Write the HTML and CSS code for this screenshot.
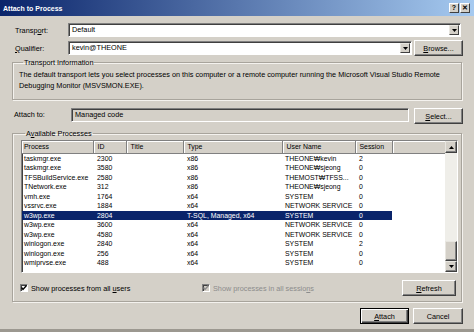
FILE: index.html
```html
<!DOCTYPE html>
<html lang="en">
<head>
    <meta charset="UTF-8">
    <title>Attach to Process</title>
    <link rel="stylesheet" href="styles.css">
</head>
<body>
    <div class="window">
        <div class="titlebar">
            <span class="title">Attach to Process</span>
            <div class="caption-btns">
                <span class="cbtn">?</span>
                <span class="cbtn">&#x2715;</span>
            </div>
        </div>

        <div class="content">
            <!-- Transport / Qualifier -->
            <div class="field field-first">
                <label>Transp<u>o</u>rt:</label>
                <div class="combo combo-wide"><span>Default</span><span class="drop"><svg width="5" height="3"><polygon points="0,0 5,0 2.5,3" fill="#000"/></svg></span></div>
            </div>
            <div class="field field-second">
                <label><u>Q</u>ualifier:</label>
                <div class="combo"><span>kevin@THEONE</span><span class="drop"><svg width="5" height="3"><polygon points="0,0 5,0 2.5,3" fill="#000"/></svg></span></div>
                <button class="btn"><u>B</u>rowse...</button>
            </div>

            <fieldset class="group group-info">
                <legend>Transport Information</legend>
                <p>The default transport lets you select processes on this computer or a remote computer running the Microsoft Visual Studio Remote Debugging Monitor (MSVSMON.EXE).</p>
            </fieldset>

            <div class="field field-attach">
                <label>Attach to:</label>
                <div class="textbox">Managed code</div>
                <button class="btn"><u>S</u>elect...</button>
            </div>

            <fieldset class="group group-procs">
                <legend>A<u>v</u>ailable Processes</legend>
                <div class="list">
                    <table class="procs">
                        <colgroup>
                            <col class="c-proc"><col class="c-id"><col class="c-title"><col class="c-type"><col class="c-user"><col class="c-sess"><col>
                        </colgroup>
                        <thead>
                            <tr><th>Process</th><th>ID</th><th>Title</th><th>Type</th><th>User Name</th><th>Session</th><th></th></tr>
                        </thead>
                        <tbody>
                            <tr><td>taskmgr.exe</td><td>2300</td><td></td><td>x86</td><td>THEONE₩kevin</td><td>2</td><td></td></tr>
                            <tr><td>taskmgr.exe</td><td>3580</td><td></td><td>x86</td><td>THEONE₩sjeong</td><td>0</td><td></td></tr>
                            <tr><td>TFSBuildService.exe</td><td>2580</td><td></td><td>x86</td><td>THEMOST₩TFSS...</td><td>0</td><td></td></tr>
                            <tr><td>TNetwork.exe</td><td>312</td><td></td><td>x86</td><td>THEONE₩sjeong</td><td>0</td><td></td></tr>
                            <tr><td>vmh.exe</td><td>1764</td><td></td><td>x64</td><td>SYSTEM</td><td>0</td><td></td></tr>
                            <tr><td>vssrvc.exe</td><td>1884</td><td></td><td>x64</td><td>NETWORK SERVICE</td><td>0</td><td></td></tr>
                            <tr class="selected"><td>w3wp.exe</td><td>2804</td><td></td><td>T-SQL, Managed, x64</td><td>SYSTEM</td><td>0</td><td></td></tr>
                            <tr><td>w3wp.exe</td><td>3600</td><td></td><td>x64</td><td>NETWORK SERVICE</td><td>0</td><td></td></tr>
                            <tr><td>w3wp.exe</td><td>4580</td><td></td><td>x64</td><td>NETWORK SERVICE</td><td>0</td><td></td></tr>
                            <tr><td>winlogon.exe</td><td>2840</td><td></td><td>x64</td><td>SYSTEM</td><td>2</td><td></td></tr>
                            <tr><td>winlogon.exe</td><td>256</td><td></td><td>x64</td><td>SYSTEM</td><td>0</td><td></td></tr>
                            <tr><td>wmiprvse.exe</td><td>488</td><td></td><td>x64</td><td>SYSTEM</td><td>0</td><td></td></tr>
                        </tbody>
                    </table>
                    <div class="scrollbar">
                        <span class="sb-btn"><svg width="5" height="3"><polygon points="0,3 5,3 2.5,0" fill="#000"/></svg></span>
                        <div class="sb-track"><span class="sb-thumb"></span></div>
                        <span class="sb-btn sb-down"><svg width="5" height="3"><polygon points="0,0 5,0 2.5,3" fill="#000"/></svg></span>
                    </div>
                </div>

                <div class="options">
                    <label class="check">
                        <span class="box"><svg width="6" height="6"><polyline points="0.5,2.5 2,4.5 5.5,0.5" fill="none" stroke="#000" stroke-width="1.4"/></svg></span>
                        <span>Show processes from all <u>u</u>sers</span>
                    </label>
                    <label class="check disabled">
                        <span class="box"><svg width="6" height="6"><polyline points="0.5,2.5 2,4.5 5.5,0.5" fill="none" stroke="#8c8c8c" stroke-width="1.4"/></svg></span>
                        <span>Show processes in all sessio<u>n</u>s</span>
                    </label>
                    <button class="btn btn-refresh"><u>R</u>efresh</button>
                </div>
            </fieldset>

            <div class="footer">
                <button class="btn btn-default"><u>A</u>ttach</button>
                <button class="btn btn-cancel">Cancel</button>
            </div>
        </div>
    </div>
</body>
</html>
```

FILE: styles.css
```css
* {
    margin: 0;
    padding: 0;
    box-sizing: border-box;
}

body {
    background: #d4d0c8;
    font-family: "Liberation Sans", Arial, sans-serif;
    font-size: 7.3px;
    color: #000;
}

.window {
    width: 474px;
    height: 332px;
    background: #d4d0c8;
    border-bottom: 3px solid #9c9890;
    display: flex;
    flex-direction: column;
}

/* title bar */
.titlebar {
    height: 16px;
    flex: none;
    background: linear-gradient(to right, #0a246a, #a6caf0);
    display: flex;
    align-items: center;
    justify-content: space-between;
    padding: 0 4px 0 3px;
}

.title {
    color: #fff;
    font-weight: bold;
    font-size: 7px;
}

.caption-btns {
    display: flex;
    gap: 1px;
}

.cbtn {
    width: 10px;
    height: 10px;
    background: #d4d0c8;
    border: 1px solid;
    border-color: #fff #404040 #404040 #fff;
    font-size: 7px;
    font-weight: bold;
    line-height: 8px;
    text-align: center;
}

.content {
    flex: 1;
    padding: 0 11px 0 12px;
    display: flex;
    flex-direction: column;
}

/* label + control rows */
.field {
    display: flex;
    align-items: center;
}

.field label {
    width: 56px;
    padding-left: 3px;
    flex: none;
}

.field-first {
    margin-top: 7px;
    height: 14px;
}

.field-second {
    margin-top: 3px;
    height: 16px;
}

.field-attach {
    margin-top: 8.5px;
    height: 16px;
    align-items: flex-start;
}

.field-attach label {
    width: 59px;
    padding-left: 2px;
    line-height: 14px;
}

.combo,
.textbox {
    flex: 1;
    height: 14px;
    background: #fff;
    border: 1px solid;
    border-color: #808080 #fff #fff #808080;
    box-shadow: inset 1px 1px 0 #404040;
    padding-left: 3px;
    line-height: 12px;
    display: flex;
    align-items: center;
    justify-content: space-between;
}

.combo-wide {
    margin-right: 2px;
}

.textbox {
    background: #d4d0c8;
    margin-right: 5px;
}

.drop {
    width: 10px;
    height: 10px;
    margin-right: 1px;
    background: #d4d0c8;
    border: 1px solid;
    border-color: #e8e6e0 #404040 #404040 #e8e6e0;
    display: flex;
    align-items: center;
    justify-content: center;
}

.btn {
    font-family: inherit;
    font-size: 7.3px;
    color: #000;
    width: 49px;
    height: 16px;
    flex: none;
    background: #d4d0c8;
    border: 1px solid;
    border-color: #fff #404040 #404040 #fff;
    box-shadow: inset -1px -1px 0 #808080;
}

.field-second .btn {
    margin-left: 2px;
}

/* group boxes */
.group {
    border: 1px solid #a8a49c;
    box-shadow: 1px 1px 0 #f4f2ee, inset 1px 1px 0 #f4f2ee;
    margin-right: 1px;
}

.group legend {
    margin-left: 4px;
    padding: 0 1px;
    line-height: 9px;
}

.group-info {
    margin-top: 1.5px;
    padding: 2px 8px 8px 6px;
}

.group-info p {
    line-height: 11px;
}

.group-procs {
    margin-top: 4.5px;
    padding: 2.5px 3px 5px 8px;
}

/* process list */
.list {
    height: 133px;
    background: #fff;
    border: 1px solid;
    border-color: #808080 #fff #fff #808080;
    box-shadow: inset 1px 1px 0 #404040;
    display: flex;
}

.procs {
    width: 423px;
    table-layout: fixed;
    border-collapse: collapse;
    align-self: flex-start;
    font-size: 6.9px;
}

.c-proc { width: 71px; }
.c-id { width: 33px; }
.c-title { width: 57px; }
.c-type { width: 99px; }
.c-user { width: 73px; }
.c-sess { width: 37px; }

.procs th {
    height: 12px;
    font-weight: normal;
    text-align: left;
    padding: 0 0 0 4px;
    background: #d4d0c8;
    border-right: 1px solid #808080;
    border-bottom: 1px solid #808080;
    box-shadow: inset 1px 1px 0 #fff;
}

.procs th:last-child {
    border-right: none;
}

.procs td {
    height: 9.5px;
    line-height: 9.5px;
    padding: 0 0 0 4px;
    white-space: nowrap;
}

.procs td:first-child,
.procs th:first-child {
    padding-left: 2px;
}

.procs td:nth-child(5) {
    padding-left: 3px;
}

.procs tr.selected td {
    background: #0a246a;
    color: #fff;
}

.procs tr.selected td:last-child {
    background: #fff;
}

.scrollbar {
    width: 12px;
    display: flex;
    flex-direction: column;
    background: #efeee9;
}

.sb-btn {
    height: 12px;
    flex: none;
    background: #d4d0c8;
    border: 1px solid;
    border-color: #e8e6e0 #404040 #404040 #e8e6e0;
    box-shadow: inset -1px -1px 0 #808080;
    display: flex;
    align-items: center;
    justify-content: center;
}

.sb-down {
    height: 11px;
}

.sb-track {
    flex: 1;
    display: flex;
    flex-direction: column;
    justify-content: flex-end;
}

.sb-thumb {
    height: 20px;
    background: #d4d0c8;
    border: 1px solid;
    border-color: #e8e6e0 #404040 #404040 #e8e6e0;
    box-shadow: inset -1px -1px 0 #808080;
}

/* checkboxes + refresh */
.options {
    margin-top: 7px;
    height: 16px;
    display: flex;
    align-items: center;
}

.check {
    display: flex;
    align-items: center;
    gap: 3px;
}

.check:first-child {
    margin-left: -1px;
    width: 182px;
}

.check .box {
    width: 8px;
    height: 8px;
    background: #fff;
    border: 1px solid;
    border-color: #808080 #fff #fff #808080;
    box-shadow: inset 1px 1px 0 #404040;
    display: flex;
    align-items: center;
    justify-content: center;
}

.check.disabled {
    color: #8c8c8c;
}

.check.disabled .box {
    background: #d4d0c8;
}

.btn-refresh {
    width: 54px;
    margin-left: auto;
    margin-right: 2px;
}

/* dialog buttons */
.footer {
    margin-top: 6px;
    display: flex;
    justify-content: flex-end;
    gap: 4px;
}

.btn-default {
    border: 1px solid #000;
    box-shadow: inset 1px 1px 0 #fff, inset -1px -1px 0 #404040, inset -2px -2px 0 #808080;
}

.btn-cancel {
    width: 50px;
}
```
